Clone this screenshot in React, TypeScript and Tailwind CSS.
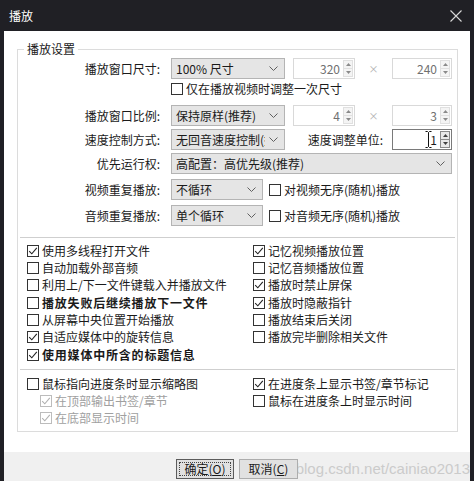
import type { ReactNode } from "react";

function Chevron() {
  return (
    <svg width="9" height="5" viewBox="0 0 9 5" className="shrink-0">
      <path d="M0.5 0.5 L4.5 4.5 L8.5 0.5" fill="none" stroke="#606060" strokeWidth="1" />
    </svg>
  );
}

function Select({ w, children }: { w: string; children: ReactNode }) {
  return (
    <div
      className={`${w} h-[21px] shrink-0 flex items-center border border-[#b4b4b4] bg-[#e5e5e5] pl-[4px] pr-[6px] gap-[4px]`}
    >
      <span className="flex-1 overflow-hidden whitespace-nowrap leading-[17px]">{children}</span>
      <Chevron />
    </div>
  );
}

function SpinBox({
  w,
  value,
  active = false,
  cursor = false,
}: {
  w: string;
  value: string;
  active?: boolean;
  cursor?: boolean;
}) {
  const arrow = active ? "#404040" : "#8a8a8a";
  return (
    <div
      className={`${w} h-[21px] shrink-0 relative flex items-center bg-white border ${
        active ? "border-[#7a7a7a]" : "border-[#d9d9d9]"
      }`}
    >
      <span
        className={`flex-1 text-right pr-[3px] leading-none ${
          active ? "text-[#1a1a1a]" : "text-[#707070]"
        }`}
      >
        {value}
      </span>
      <div
        className={`w-[10px] h-[17px] mr-[1px] flex flex-col border ${
          active ? "border-[#8a8a8a] bg-[#e8e8e8]" : "border-[#e0e0e0] bg-[#f4f4f4]"
        }`}
      >
        <div className="flex-1 flex items-center justify-center">
          <svg width="5" height="3" viewBox="0 0 5 3">
            <path d="M0 3 L2.5 0 L5 3 Z" fill={arrow} />
          </svg>
        </div>
        <div className={`h-px ${active ? "bg-[#8a8a8a]" : "bg-[#e0e0e0]"}`} />
        <div className="flex-1 flex items-center justify-center">
          <svg width="5" height="3" viewBox="0 0 5 3">
            <path d="M0 0 L2.5 3 L5 0 Z" fill={arrow} />
          </svg>
        </div>
      </div>
      {cursor && (
        <svg
          width="7"
          height="17"
          viewBox="0 0 7 17"
          className="absolute left-[32px] top-[1px]"
        >
          <path
            d="M0.5 0.5 H2.5 L3.5 1.5 L4.5 0.5 H6.5 M3.5 1.5 V15.5 M0.5 16.5 H2.5 L3.5 15.5 L4.5 16.5 H6.5"
            fill="none"
            stroke="#111"
            strokeWidth="1"
          />
        </svg>
      )}
    </div>
  );
}

function Check({ checked, disabled = false }: { checked?: boolean; disabled?: boolean }) {
  return (
    <span
      className={`w-[12px] h-[12px] shrink-0 flex items-center justify-center bg-white border ${
        disabled ? "border-[#bcbcbc]" : "border-[#333333]"
      }`}
    >
      {checked && (
        <svg width="10" height="10" viewBox="0 0 10 10">
          <path
            d="M1.2 5.2 L3.8 7.8 L8.8 1.8"
            fill="none"
            stroke={disabled ? "#b0b0b0" : "#222"}
            strokeWidth="1.1"
          />
        </svg>
      )}
    </span>
  );
}

function CheckItem({
  label,
  checked,
  bold,
  disabled,
  h = "h-[17.33px]",
}: {
  label: string;
  checked?: boolean;
  bold?: boolean;
  disabled?: boolean;
  h?: string;
}) {
  return (
    <div className={`${h} flex items-center gap-[3px]`}>
      <Check checked={checked} disabled={disabled} />
      <span
        className={`leading-none whitespace-nowrap ${bold ? "font-bold tracking-[0.8px]" : ""} ${
          disabled ? "text-[#a0a0a0]" : ""
        }`}
      >
        {label}
      </span>
    </div>
  );
}

function Label({ children }: { children: ReactNode }) {
  return <span className="w-[142px] shrink-0 text-right leading-none mr-[11px]">{children}</span>;
}

function Times() {
  return <span className="w-[37px] shrink-0 text-center text-[#b0b0b0] text-[10px] leading-none">×</span>;
}

const leftItems = [
  { label: "使用多线程打开文件", checked: true },
  { label: "自动加载外部音频" },
  { label: "利用上/下一文件键载入并播放文件" },
  { label: "播放失败后继续播放下一文件", bold: true },
  { label: "从屏幕中央位置开始播放" },
  { label: "自适应媒体中的旋转信息", checked: true },
  { label: "使用媒体中所含的标题信息", checked: true, bold: true },
];

const rightItems = [
  { label: "记忆视频播放位置", checked: true },
  { label: "记忆音频播放位置" },
  { label: "播放时禁止屏保", checked: true },
  { label: "播放时隐蔽指针", checked: true },
  { label: "播放结束后关闭" },
  { label: "播放完毕删除相关文件" },
];

export default function App() {
  return (
    <div className="w-[474px] h-[481px] relative overflow-hidden bg-[#202025] flex flex-col font-['Noto_Sans_CJK_SC',sans-serif] text-[12px] text-[#1a1a1a]">
      {/* title bar */}
      <div className="h-[31px] shrink-0 flex items-center justify-between pl-[9px] pr-[12px] text-white">
        <span className="leading-none">播放</span>
        <svg width="12" height="12" viewBox="0 0 12 12">
          <path d="M0.5 0.5 L11.5 11.5 M11.5 0.5 L0.5 11.5" stroke="#d8d8d8" strokeWidth="1.1" />
        </svg>
      </div>

      <div className="flex-1 mx-[4px] bg-white flex flex-col">
        <fieldset className="mt-[10px] ml-[13px] mr-[12px] border border-[#dcdcdc] pb-[5px]">
          <legend className="ml-[6px] px-[3px] h-[16px] leading-[16px]">播放设置</legend>

          <div className="mt-[1px] h-[21px] flex items-center">
            <Label>播放窗口尺寸:</Label>
            <Select w="w-[114px]">100% 尺寸</Select>
            <span className="w-[8px] shrink-0" />
            <SpinBox w="w-[62px]" value="320" />
            <Times />
            <SpinBox w="w-[60px]" value="240" />
          </div>
          <div className="h-[20px] flex items-center pl-[153px] gap-[3px]">
            <Check />
            <span className="leading-none">仅在播放视频时调整一次尺寸</span>
          </div>

          <div className="mt-[6px] h-[21px] flex items-center">
            <Label>播放窗口比例:</Label>
            <Select w="w-[114px]">保持原样(推荐)</Select>
            <span className="w-[8px] shrink-0" />
            <SpinBox w="w-[62px]" value="4" />
            <Times />
            <SpinBox w="w-[60px]" value="3" />
          </div>

          <div className="mt-[3px] h-[21px] flex items-center">
            <Label>速度控制方式:</Label>
            <Select w="w-[114px]">无回音速度控制(推荐)</Select>
            <span className="w-[98px] shrink-0 text-right leading-none mr-[9px]">速度调整单位:</span>
            <SpinBox w="w-[60px]" value="1" active cursor />
          </div>

          <div className="mt-[3px] h-[21px] flex items-center">
            <Label>优先运行权:</Label>
            <Select w="w-[281px]">高配置：高优先级(推荐)</Select>
          </div>

          <div className="mt-[5px] h-[21px] flex items-center">
            <Label>视频重复播放:</Label>
            <Select w="w-[92px]">不循环</Select>
            <div className="ml-[6px] flex items-center gap-[3px]">
              <Check />
              <span className="leading-none">对视频无序(随机)播放</span>
            </div>
          </div>

          <div className="mt-[5px] h-[21px] flex items-center">
            <Label>音频重复播放:</Label>
            <Select w="w-[92px]">单个循环</Select>
            <div className="ml-[6px] flex items-center gap-[3px]">
              <Check />
              <span className="leading-none">对音频无序(随机)播放</span>
            </div>
          </div>

          <div className="mt-[11px] mx-[2px] h-px bg-[#cfcfcf]" />

          <div className="mt-[4px] pl-[9px] grid grid-cols-[226px_1fr]">
            <div className="flex flex-col">
              {leftItems.map((it) => (
                <CheckItem key={it.label} {...it} />
              ))}
            </div>
            <div className="flex flex-col">
              {rightItems.map((it) => (
                <CheckItem key={it.label} {...it} />
              ))}
            </div>
          </div>

          <div className="mt-[6px] mx-[2px] h-px bg-[#cfcfcf]" />

          <div className="mt-[5px] pl-[9px] grid grid-cols-[226px_1fr]">
            <div className="flex flex-col">
              <CheckItem label="鼠标指向进度条时显示缩略图" h="h-[17px]" />
              <div className="pl-[13px]">
                <CheckItem label="在顶部输出书签/章节" checked disabled h="h-[17px]" />
                <CheckItem label="在底部显示时间" checked disabled h="h-[17px]" />
              </div>
            </div>
            <div className="flex flex-col">
              <CheckItem label="在进度条上显示书签/章节标记" checked h="h-[17px]" />
              <CheckItem label="鼠标在进度条上时显示时间" h="h-[17px]" />
            </div>
          </div>
        </fieldset>

        <div className="flex-1" />

        {/* footer */}
        <div className="h-[29px] shrink-0 bg-[#f0f0f0] flex items-start pt-[7px] pl-[172px] gap-[5px]">
          <button className="relative z-10 w-[58px] h-[20px] bg-[#e1e1e1] border border-[#5c5c5c] p-[2px]">
            <span className="w-full h-full flex items-center justify-center border border-dotted border-[#444] leading-none">
              确定(<span className="underline">O</span>)
            </span>
          </button>
          <button className="relative z-10 w-[59px] h-[20px] bg-[#e1e1e1] border border-[#adadad] flex items-center justify-center leading-none">
            取消(<span className="underline">C</span>)
          </button>
        </div>
      </div>

      {/* watermark, sits behind the buttons */}
      <span className="absolute z-0 right-[4px] bottom-[3px] font-['Liberation_Sans',sans-serif] text-[15px] leading-[18px] text-[#cbcbcb] pointer-events-none">
        https://blog.csdn.net/cainiao2013
      </span>
    </div>
  );
}
